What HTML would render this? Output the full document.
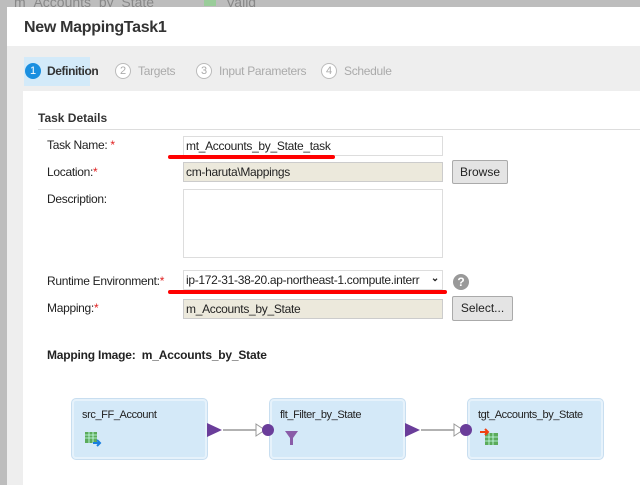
<!DOCTYPE html>
<html><head><style>
*{margin:0;padding:0;box-sizing:border-box}
body{width:640px;height:485px;overflow:hidden;background:#bdbdbd;font-family:"Liberation Sans",sans-serif;position:relative;color:#222}
.a{position:absolute}
.inp{position:absolute;border:1px solid #ddd;background:#fff;font-size:12px;padding:3px 2px;letter-spacing:-0.3px;line-height:12px}
.beige{background:#ece9dc;border-color:#ccc}
.lbl{position:absolute;font-size:12px;left:47px;letter-spacing:-0.3px}
.st{color:#e02020}
.btn{position:absolute;border:1px solid #aaa;background:#e4e4e4;border-radius:2px;font-size:12px;text-align:center;line-height:22px}
.box{position:absolute;top:399px;width:135px;height:60px;background:#d4e9f8;border:2px solid #e6f2fb;border-radius:4px;box-shadow:0 0 0 1px #c8def0;font-size:11px;padding:8px 8px;letter-spacing:-0.4px}
.num{position:absolute;top:63px;width:16px;height:16px;border-radius:50%;border:1px solid #bbb;text-align:center;line-height:14px;font-size:11px;color:#aaa;background:#fff}
.stl{position:absolute;top:64px;font-size:12px;color:#aaa;letter-spacing:-0.3px}
</style></head><body>
<div class="a" style="left:14px;top:-6px;font-size:14px;color:#888">m_Accounts_by_State</div>
<div class="a" style="left:204px;top:-4px;width:12px;height:10px;background:#9c9"></div>
<div class="a" style="left:226px;top:-6px;font-size:14px;color:#888">Valid</div>
<div class="a" style="left:7px;top:7px;width:633px;height:478px;background:#fff"></div>
<div class="a" style="left:24px;top:19px;font-size:16px;font-weight:bold;color:#333;letter-spacing:-0.3px">New MappingTask1</div>
<div class="a" style="left:7px;top:46px;width:633px;height:439px;background:#eeeeee"></div>
<div class="a" style="left:24px;top:57px;width:66px;height:29px;background:#d3eaf9"></div>
<div class="a" style="left:25px;top:63px;width:16px;height:16px;border-radius:50%;background:#1a8fe0;color:#fff;font-size:11px;text-align:center;line-height:16px">1</div>
<div class="a" style="left:47px;top:64px;font-size:12px;font-weight:bold;color:#333;letter-spacing:-0.4px">Definition</div>
<div class="num" style="left:115px">2</div><div class="stl" style="left:138px">Targets</div>
<div class="num" style="left:196px">3</div><div class="stl" style="left:219px">Input Parameters</div>
<div class="num" style="left:321px">4</div><div class="stl" style="left:344px">Schedule</div>
<div class="a" style="left:23px;top:91px;width:617px;height:394px;background:#fff"></div>
<div class="a" style="left:38px;top:111px;font-size:12px;font-weight:bold;color:#333">Task Details</div>
<div class="a" style="left:38px;top:129px;width:602px;height:1px;background:#ddd"></div>
<div class="lbl" style="top:138px">Task Name: <span class="st">*</span></div>
<div class="inp" style="left:183px;top:136px;width:260px;height:20px">mt_Accounts_by_State_task</div>
<div class="a" style="left:168px;top:155px;width:167px;height:4px;background:#f00;border-radius:2px"></div>
<div class="lbl" style="top:165px">Location:<span class="st">*</span></div>
<div class="inp beige" style="left:183px;top:162px;width:260px;height:20px">cm-haruta\Mappings</div>
<div class="btn" style="left:452px;top:160px;width:56px;height:24px">Browse</div>
<div class="lbl" style="top:192px">Description:</div>
<div class="inp" style="left:183px;top:189px;width:260px;height:69px"></div>
<div class="lbl" style="top:274px">Runtime Environment:<span class="st">*</span></div>
<div class="inp" style="left:183px;top:270px;width:260px;height:20px;white-space:nowrap;overflow:hidden">ip-172-31-38-20.ap-northeast-1.compute.interr<span style="position:absolute;right:3px;top:2px;font-size:10px;font-weight:bold">&#8964;</span></div>
<div class="a" style="left:168px;top:290px;width:279px;height:4px;background:#f00;border-radius:2px"></div>
<div class="a" style="left:453px;top:274px;width:16px;height:16px;border-radius:50%;background:#999;color:#fff;font-size:12px;font-weight:bold;text-align:center;line-height:16px">?</div>
<div class="lbl" style="top:301px">Mapping:<span class="st">*</span></div>
<div class="inp beige" style="left:183px;top:299px;width:260px;height:20px">m_Accounts_by_State</div>
<div class="btn" style="left:452px;top:296px;width:61px;height:25px">Select...</div>
<div class="a" style="left:47px;top:348px;font-size:12px;font-weight:bold;color:#222;letter-spacing:-0.2px">Mapping Image:&nbsp; m_Accounts_by_State</div>

<div class="box" style="left:72px">src_FF_Account
<svg class="a" style="left:10px;top:30px" width="20" height="16"><rect x="1" y="1" width="12" height="11" fill="#5bab5b"/><path d="M1 4h12M1 7h12M5 1v11M9 1v11" stroke="#cfe" stroke-width="0.8"/><path d="M9 12h7M13 9l3 3-3 3" stroke="#1a7fe0" stroke-width="2" fill="none"/></svg></div>
<div class="box" style="left:270px">flt_Filter_by_State
<svg class="a" style="left:12px;top:28px" width="16" height="18"><path d="M1 2h13l-5 7v7h-3v-7z" fill="#8a5ca8"/></svg></div>
<div class="box" style="left:468px">tgt_Accounts_by_State
<svg class="a" style="left:10px;top:26px" width="22" height="20"><rect x="5" y="6" width="13" height="12" fill="#5bab5b"/><path d="M5 10h13M5 14h13M9 6v12M13 6v12" stroke="#cfe" stroke-width="0.8"/><path d="M0 5h7M5 2l3 3-3 3" stroke="#f04010" stroke-width="2" fill="none"/></svg></div>

<svg class="a" style="left:0;top:0" width="640" height="485">
<g>
<path d="M207 423l15 7-15 7z" fill="#6a3d9a"/>
<line x1="223" y1="430" x2="256" y2="430" stroke="#999" stroke-width="1.5"/>
<path d="M256 424l9 6-9 6z" fill="#fff" stroke="#999"/>
<circle cx="268" cy="430" r="6" fill="#6a3d9a"/>
</g>
<g>
<path d="M405 423l15 7-15 7z" fill="#6a3d9a"/>
<line x1="421" y1="430" x2="454" y2="430" stroke="#999" stroke-width="1.5"/>
<path d="M454 424l9 6-9 6z" fill="#fff" stroke="#999"/>
<circle cx="466" cy="430" r="6" fill="#6a3d9a"/>
</g>
</svg>
</body></html>
